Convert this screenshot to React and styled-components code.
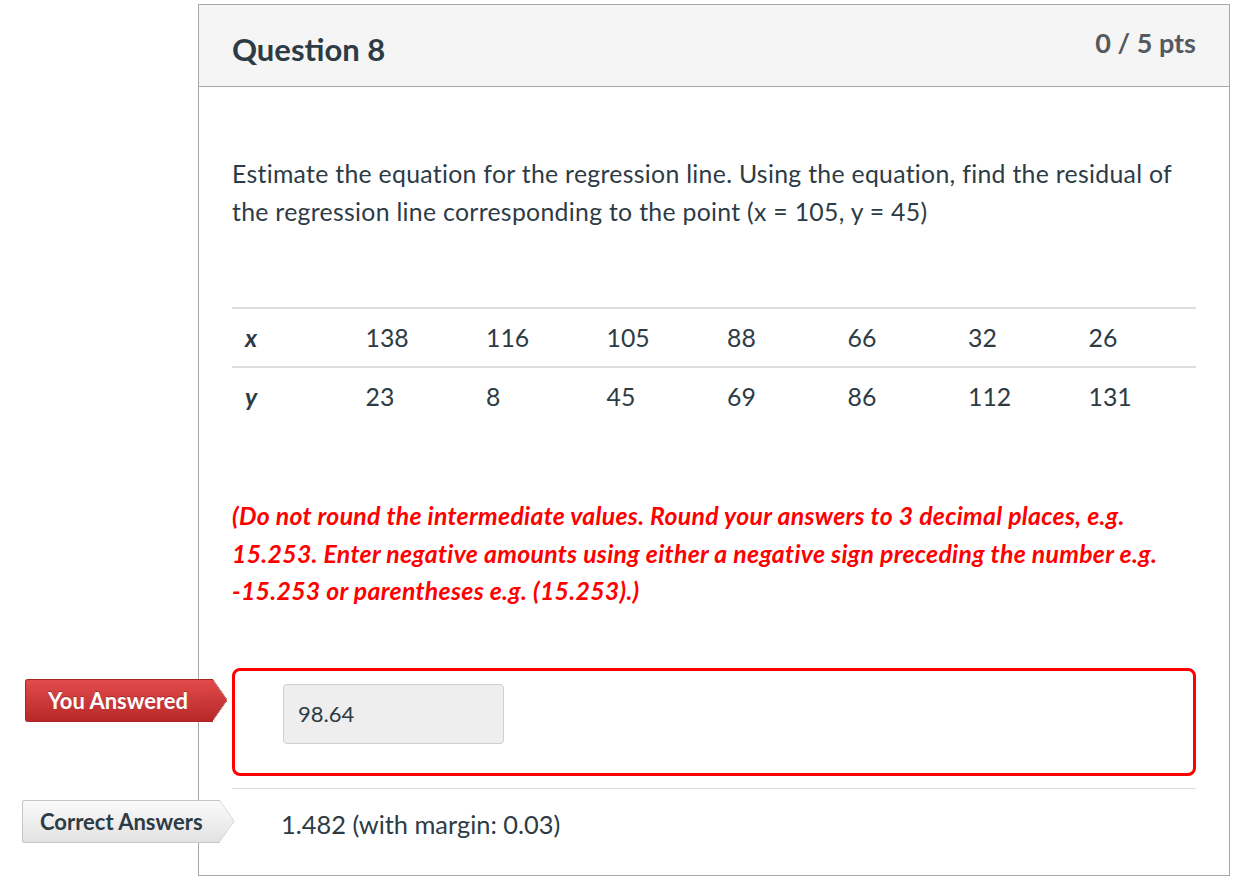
import React from "react";
import styled, { createGlobalStyle } from "styled-components";

const Global = createGlobalStyle`
  html, body { margin: 0; padding: 0; background: #fff; }
  body { font-family: Lato, "Open Sans", "Liberation Sans", sans-serif; color: #2d3b45; }
`;

const Page = styled.div`
  width: 1239px;
  height: 896px;
  padding-top: 4px;
  box-sizing: border-box;
`;

const Card = styled.section`
  margin-left: 198px;
  width: 1032px;
  height: 872px;
  box-sizing: border-box;
  border: 1px solid #a8a8a8;
  display: flex;
  flex-direction: column;
`;

const Header = styled.header`
  height: 82px;
  flex-shrink: 0;
  box-sizing: border-box;
  background: #f5f5f5;
  border-bottom: 1px solid #a8a8a8;
  display: flex;
  justify-content: space-between;
  align-items: flex-start;
  padding: 0 33px;
`;

const Title = styled.h2`
  margin: 0;
  padding-top: 27px;
  font-size: 31px;
  line-height: 34px;
  font-weight: 700;
  color: #2d3b45;
`;

const Points = styled.div`
  padding-top: 23px;
  font-size: 27px;
  line-height: 30px;
  font-weight: 700;
  color: #555a5e;
`;

const Body = styled.div`
  padding: 0 33px;
  display: flex;
  flex-direction: column;
`;

const Prompt = styled.p`
  margin: 68px 0 0;
  font-size: 24.8px;
  line-height: 38px;
  letter-spacing: 0.3px;
  color: #2d3b45;
`;

const Table = styled.div`
  margin-top: 76px;
  display: grid;
  grid-template-columns: repeat(8, 1fr);
`;

const Cell = styled.div`
  height: 59px;
  box-sizing: border-box;
  border-top: 2px solid #dedede;
  padding-left: 13px;
  display: flex;
  align-items: center;
  font-size: 24.8px;
  color: #2d3b45;
  font-weight: ${(p) => (p.$head ? 700 : 400)};
  font-style: ${(p) => (p.$head ? "italic" : "normal")};
`;

const Note = styled.p`
  margin: 72px 0 0;
  font-size: 24.8px;
  line-height: 37.5px;
  letter-spacing: 0.3px;
  font-weight: 700;
  font-style: italic;
  color: #ff0000;
`;

const AnswerRow = styled.div`
  position: relative;
  margin-top: ${(p) => p.$top}px;
`;

const Label = styled.div`
  position: absolute;
  top: 11px;
  left: ${(p) => p.$left}px;
  width: ${(p) => p.$width}px;
  height: 43px;
  box-sizing: border-box;
  border: 1px solid ${(p) => (p.$red ? "#a92626" : "#c6c6c6")};
  border-right: none;
  border-radius: 3px 0 0 3px;
  background: ${(p) =>
    p.$red
      ? "linear-gradient(to bottom, #e24b4b, #b82828)"
      : "linear-gradient(to bottom, #fbfbfb, #e2e2e2)"};
  color: ${(p) => (p.$red ? "#fff" : "#2d3b45")};
  font-size: 22px;
  font-weight: 700;
  display: flex;
  align-items: center;
  padding-left: ${(p) => p.$pad}px;
  white-space: nowrap;
  z-index: 2;
  text-shadow: ${(p) => (p.$red ? "0 -1px 0 rgba(0,0,0,0.25)" : "none")};

  & > span {
    position: relative;
    z-index: 1;
  }

  &::after {
    content: "";
    position: absolute;
    top: 5px;
    right: -15px;
    width: 30px;
    height: 30px;
    box-sizing: border-box;
    transform: scaleX(0.7) rotate(45deg);
    border-top: 1px solid ${(p) => (p.$red ? "#a92626" : "#c6c6c6")};
    border-right: 1px solid ${(p) => (p.$red ? "#a92626" : "#c6c6c6")};
    background: ${(p) =>
      p.$red
        ? "linear-gradient(135deg, #e24b4b, #b82828)"
        : "linear-gradient(135deg, #fbfbfb, #e2e2e2)"};
    border-radius: 0 2px 0 0;
  }
`;

const WrongBox = styled.div`
  height: 108px;
  box-sizing: border-box;
  border: 3px solid #ff0000;
  border-radius: 8px;
  padding: 13px 0 0 48px;
`;

const AnswerInput = styled.div`
  width: 221px;
  height: 60px;
  box-sizing: border-box;
  background: #eeeeee;
  border: 1px solid #cfcfcf;
  border-radius: 4px;
  padding-left: 14px;
  display: flex;
  align-items: center;
  font-size: 22px;
  color: #2d3b45;
`;

const Divider = styled.div`
  margin-top: 12px;
  border-top: 1px solid #dadada;
`;

const CorrectText = styled.div`
  height: 70px;
  padding-left: 49px;
  display: flex;
  align-items: center;
  font-size: 25.4px;
  color: #2d3b45;
`;

const xs = ["138", "116", "105", "88", "66", "32", "26"];
const ys = ["23", "8", "45", "69", "86", "112", "131"];

export default function App() {
  return (
    <Page>
      <Global />
      <Card>
        <Header>
          <Title>Question 8</Title>
          <Points>0 / 5 pts</Points>
        </Header>
        <Body>
          <Prompt>
            Estimate the equation for the regression line. Using the equation, find the residual of
            the regression line corresponding to the point (x = 105, y = 45)
          </Prompt>
          <Table>
            <Cell $head>x</Cell>
            {xs.map((v, i) => (
              <Cell key={"x" + i}>{v}</Cell>
            ))}
            <Cell $head>y</Cell>
            {ys.map((v, i) => (
              <Cell key={"y" + i}>{v}</Cell>
            ))}
          </Table>
          <Note>
            (Do not round the intermediate values. Round your answers to 3 decimal places, e.g.
            15.253. Enter negative amounts using either a negative sign preceding the number e.g.
            -15.253 or parentheses e.g. (15.253).)
          </Note>
          <AnswerRow $top={58}>
            <Label $red $left={-207} $width={188} $pad={22}>
              <span>You Answered</span>
            </Label>
            <WrongBox>
              <AnswerInput>98.64</AnswerInput>
            </WrongBox>
          </AnswerRow>
          <Divider />
          <AnswerRow $top={0}>
            <Label $left={-210} $width={198} $pad={17}>
              <span>Correct Answers</span>
            </Label>
            <CorrectText>1.482 (with margin: 0.03)</CorrectText>
          </AnswerRow>
        </Body>
      </Card>
    </Page>
  );
}
